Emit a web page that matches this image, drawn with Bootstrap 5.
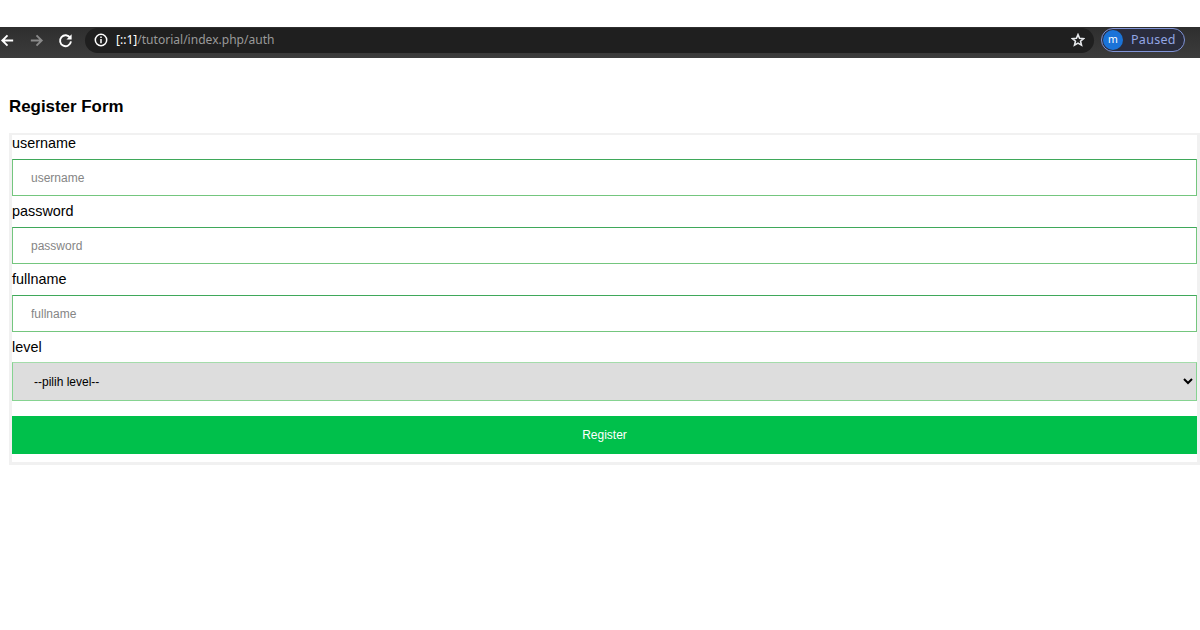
<!DOCTYPE html>
<html>
<head>
<meta charset="utf-8">
<title>Register</title>
<link href="https://cdn.jsdelivr.net/npm/bootstrap@5.3.0/dist/css/bootstrap.min.css" rel="stylesheet">
<style>
html,body{background:#fff;margin:0;overflow:hidden}
body{font-family:"Liberation Sans",Arial,sans-serif;color:#000}
.shot-top{height:27px}
.chrome-bar{height:31px;background:linear-gradient(#2e2e2e,#3c3c3c);color:#fff;padding-bottom:5px}
.nav-ico{width:17px;height:17px;flex:none}
.back-ico{margin-left:-1px}
.step-ico{margin-left:12px}
.omni{background:#1f1f1f;height:25px;width:1009px;border-radius:13px;margin-left:11px;padding:0 9px;font-family:"Noto Sans",sans-serif;font-size:12.050px;color:#9a9a9a}
.omni b{font-weight:400;color:#fff}
.pause-pill{height:24px;width:84px;background:#2a2c3c;border:1px solid #7f93d6;border-radius:12px;margin-left:7px;color:#93a6e4;font-family:"Noto Sans",sans-serif;font-size:12.500px;letter-spacing:.3px;padding-left:1px}
.avatar-dot{width:20px;height:20px;background:#1a73d8;color:#fff;border-radius:50%;font-size:10.500px;margin-right:8px}
.page-title{font-size:16.900px;font-weight:700;line-height:20px;margin:39px 0 16px 9px;color:#000}
.form-box{margin:0 0 0 9px;width:1191px;height:332px;border:3px solid #f1f1f1;border-top-width:2px}
.form-box label{display:block;font-size:14.400px;line-height:17px;margin:0;color:#000}
.fld-input{display:block;width:1185px;height:37px;border:1px solid #74c67e;border-top-color:#3fa85a;padding:0 18px;font-size:12px;font-family:"Liberation Sans",Arial,sans-serif;margin:7px 0;outline:0;border-radius:0;background:#fff}
.fld-input::placeholder{color:#858585;opacity:1}
.fld-select{display:block;width:1185px;height:39px;border:1px solid #86d391;border-top-color:#a4dcab;background:#ddd;padding:0 17px;font-size:12px;font-family:"Liberation Sans",Arial,sans-serif;margin:6px 0 15px;color:#000;border-radius:0}
.reg-btn{display:block;width:1185px;height:38px;background:#00c04b;color:#fff;border:0;font-size:12px;font-family:"Liberation Sans",Arial,sans-serif;border-radius:0;padding:0}
</style>
</head>
<body>
<div class="shot-top"></div>
<div class="chrome-bar d-flex align-items-center">
  <svg class="nav-ico back-ico" viewBox="0 0 18 18"><path d="M15 9H4M9 3.500 3.500 9 9 14.500" fill="none" stroke="#fff" stroke-width="2"/></svg>
  <svg class="nav-ico step-ico" viewBox="0 0 18 18"><path d="M3 9h11M9 3.500 14.500 9 9 14.500" fill="none" stroke="#8a8a8a" stroke-width="2"/></svg>
  <svg class="nav-ico step-ico" viewBox="0 0 18 18"><path d="M14 6.200A5.800 5.800 0 1 0 14.800 10" fill="none" stroke="#fff" stroke-width="2"/><path d="M15.500 2.500v5.500H10z" fill="#fff"/></svg>
  <div class="omni d-flex align-items-center">
    <svg width="14" height="14" viewBox="0 0 14 14" class="me-2 flex-none"><circle cx="7" cy="7" r="5.700" fill="none" stroke="#fff" stroke-width="1.500"/><path d="M7 6v4.200M7 3.500v1.500" stroke="#fff" stroke-width="1.500"/></svg>
    <span><b>[::1]</b>/tutorial/index.php/auth</span>
    <svg class="ms-auto" width="14" height="14" viewBox="0 0 16 16"><path d="M8 1.800 9.800 6l4.600.4-3.500 3 1.100 4.500L8 11.500 4 13.900l1.100-4.500-3.500-3L6.200 6z" fill="none" stroke="#e8eaed" stroke-width="1.800"/></svg>
  </div>
  <div class="pause-pill d-flex align-items-center">
    <span class="avatar-dot d-flex align-items-center justify-content-center">m</span>Paused
  </div>
</div>
<h1 class="page-title">Register Form</h1>
<form class="form-box">
  <label>username</label>
  <input class="fld-input" placeholder="username">
  <label>password</label>
  <input class="fld-input" placeholder="password">
  <label>fullname</label>
  <input class="fld-input" placeholder="fullname">
  <label>level</label>
  <select class="fld-select"><option>--pilih level--</option></select>
  <button type="button" class="reg-btn">Register</button>
</form>
<script src="https://cdn.jsdelivr.net/npm/bootstrap@5.3.0/dist/js/bootstrap.bundle.min.js"></script>
</body>
</html>
